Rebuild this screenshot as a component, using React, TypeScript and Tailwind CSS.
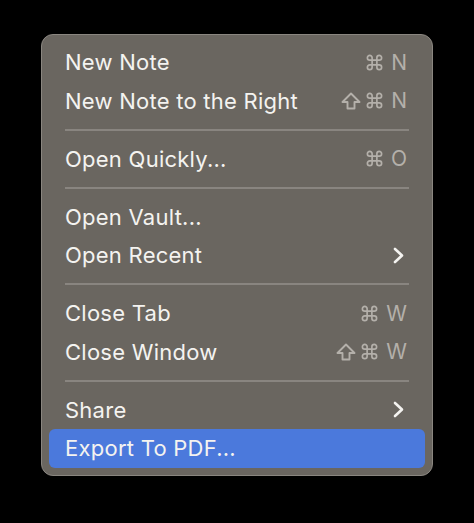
import { ReactNode } from "react";

type Item = {
  label: string;
  keys?: { shift?: boolean; key: string };
  submenu?: boolean;
  active?: boolean;
};

const groups: Item[][] = [
  [
    { label: "New Note", keys: { key: "N" } },
    { label: "New Note to the Right", keys: { shift: true, key: "N" } },
  ],
  [{ label: "Open Quickly...", keys: { key: "O" } }],
  [{ label: "Open Vault..." }, { label: "Open Recent", submenu: true }],
  [
    { label: "Close Tab", keys: { key: "W" } },
    { label: "Close Window", keys: { shift: true, key: "W" } },
  ],
  [{ label: "Share", submenu: true }, { label: "Export To PDF...", active: true }],
];

function CommandGlyph() {
  return (
    <svg width="19" height="19" viewBox="0 0 24 24" fill="none" stroke="currentColor" strokeWidth="2.1">
      <path d="M15 6v12a3 3 0 1 0 3-3H6a3 3 0 1 0 3 3V6a3 3 0 1 0-3 3h12a3 3 0 1 0-3-3" />
    </svg>
  );
}

function ShiftGlyph() {
  return (
    <svg width="20" height="18" viewBox="0 0 20 18" fill="none" stroke="currentColor" strokeWidth="1.9" strokeLinejoin="round">
      <path d="M10 1.5 L18.5 10 H13.5 V16.5 H6.5 V10 H1.5 Z" />
    </svg>
  );
}

function Chevron() {
  return (
    <svg width="13" height="17" viewBox="0 0 13 17" fill="none" stroke="currentColor" strokeWidth="2.6" strokeLinecap="round" strokeLinejoin="round">
      <path d="M3 2 L10 8.5 L3 15" />
    </svg>
  );
}

function Row({ item }: { item: Item }) {
  let right: ReactNode = null;
  if (item.keys) {
    right = (
      <div className="flex items-center gap-[4px] text-[#b4b0aa]">
        {item.keys.shift && <ShiftGlyph />}
        <CommandGlyph />
        <span className="text-[21px] leading-none ml-[3px]">{item.keys.key}</span>
      </div>
    );
  } else if (item.submenu) {
    right = (
      <div className="text-[#f4f3f0] mr-[2px]">
        <Chevron />
      </div>
    );
  }
  return (
    <div
      className={`h-[38.5px] flex items-center justify-between pl-[16px] pr-[18px] rounded-[6px] ${
        item.active ? "bg-[#4b79dc]" : ""
      }`}
    >
      <span className="text-[22px] tracking-[0.25px] text-[#f4f3f0] leading-none">{item.label}</span>
      {right}
    </div>
  );
}

export default function App() {
  return (
    <div
      className="w-[474px] h-[523px] bg-black pt-[34px] pl-[41px]"
      style={{ fontFamily: "Inter, 'Noto Sans', sans-serif" }}
    >
      <div className="w-[392px] rounded-[12px] border border-[#8a8680] bg-[#6a6660] pt-[8px] pb-[7px] px-[7px]">
        {groups.map((g, gi) => (
          <div key={gi}>
            {gi > 0 && (
              <div className="h-[19.5px] flex items-center px-[16px]">
                <div className="h-[2px] w-full bg-[#898580]" />
              </div>
            )}
            {g.map((item) => (
              <Row key={item.label} item={item} />
            ))}
          </div>
        ))}
      </div>
    </div>
  );
}
